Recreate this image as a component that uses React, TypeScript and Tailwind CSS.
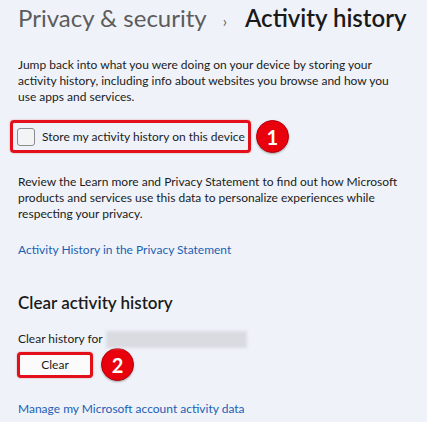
import React from "react";

function Badge({ n }: { n: string }) {
  return (
    <div className="flex h-[33px] w-[33px] shrink-0 items-center justify-center rounded-full border-[1.5px] border-[#b3000a] bg-[#e8000d] font-['Lato',sans-serif] text-[20px] font-bold leading-none text-white shadow-[0_1px_2px_rgba(0,0,0,0.3)]">
      {n}
    </div>
  );
}

export default function App() {
  return (
    <div className="h-[422px] w-[427px] overflow-hidden bg-[#eff3f9] font-['Lato','Noto_Sans',sans-serif] text-[#1b1b1b]">
      <div className="flex h-[35px] items-baseline whitespace-nowrap pl-[18px] pt-[1px] leading-[34px]">
        <span className="text-[24px] text-[#5c5c5c]">Privacy &amp; security</span>
        <span className="ml-[16px] mr-[18px] text-[15px] text-[#5c5c5c]">›</span>
        <span className="text-[24px] font-semibold text-[#1a1a1a]">Activity history</span>
      </div>

      <p className="mt-[22px] whitespace-nowrap px-[18px] text-[12px] leading-[16px]">
        Jump back into what you were doing on your device by storing your
        <br />
        activity history, including info about websites you browse and how you
        <br />
        use apps and services.
      </p>

      <div className="mt-[15px] flex h-[33px] items-center pl-[10px]">
        <div className="flex h-[33px] items-center rounded-[4px] border-[3px] border-[#e3101b] pl-[4px] pr-[3px] shadow-[0_0_2px_rgba(200,0,0,0.4)]">
          <div className="h-[18px] w-[18px] shrink-0 rounded-[3px] border border-[#8c8c8c] bg-[#f3f4f6]" />
          <span className="ml-[7px] whitespace-nowrap text-[12px]">Store my activity history on this device</span>
        </div>
        <div className="ml-[5px]">
          <Badge n="1" />
        </div>
      </div>

      <p className="mt-[21px] whitespace-nowrap px-[18px] text-[12px] leading-[16px]">
        Review the Learn more and Privacy Statement to find out how Microsoft
        <br />
        products and services use this data to personalize experiences while
        <br />
        respecting your privacy.
      </p>

      <div className="mt-[20px] px-[18px] text-[12px] leading-[16px] text-[#1b5fb5]">
        Activity History in the Privacy Statement
      </div>

      <h2 className="mt-[33px] px-[18px] text-[17px] font-semibold leading-[24px]">
        Clear activity history
      </h2>

      <div className="mt-[16px] flex h-[16px] items-center px-[18px] text-[12px] leading-[16px]">
        <span>Clear history for</span>
        <div className="ml-[3px] h-[17px] w-[141px] bg-[#d9dbe1] blur-[1.5px]" />
      </div>

      <div className="mt-[1px] flex h-[33px] items-center pl-[17px]">
        <div className="flex h-[26px] w-[76px] items-center justify-center rounded-[4px] border-[3px] border-[#e3101b] bg-[#fbfbfc] text-[12px] shadow-[0_0_2px_rgba(200,0,0,0.4)]">
          Clear
        </div>
        <div className="ml-[8px]">
          <Badge n="2" />
        </div>
      </div>

      <div className="mt-[20px] px-[18px] text-[12px] leading-[16px] text-[#1b5fb5]">
        Manage my Microsoft account activity data
      </div>
    </div>
  );
}
